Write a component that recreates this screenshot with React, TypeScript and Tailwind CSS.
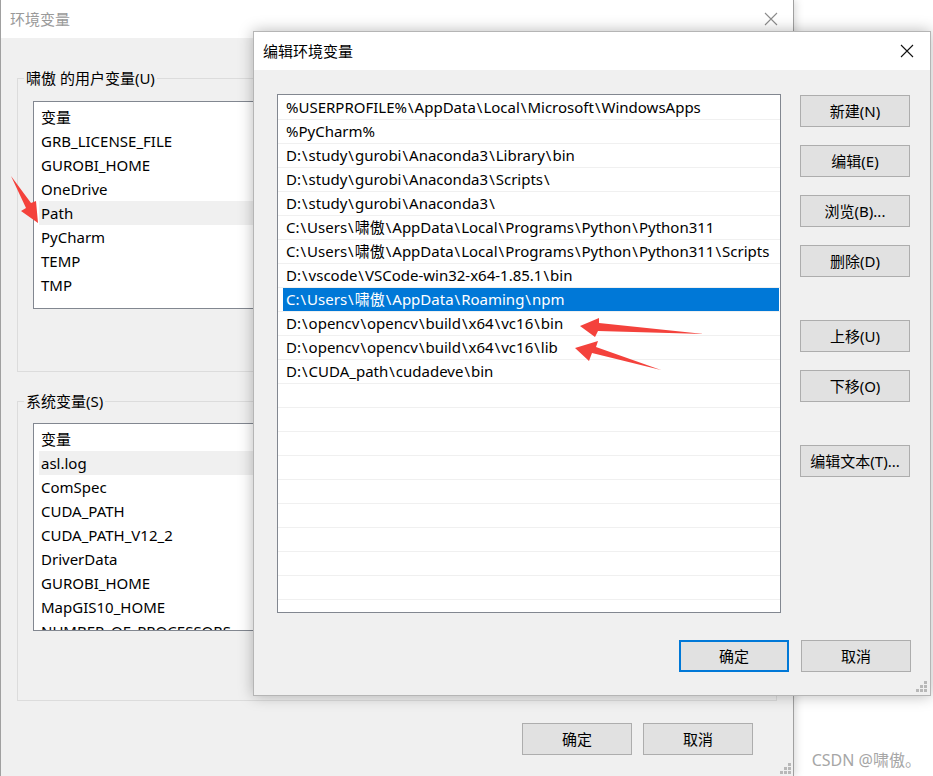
const userVars = ["GRB_LICENSE_FILE", "GUROBI_HOME", "OneDrive", "Path", "PyCharm", "TEMP", "TMP"];
const sysVars = [
  "asl.log",
  "ComSpec",
  "CUDA_PATH",
  "CUDA_PATH_V12_2",
  "DriverData",
  "GUROBI_HOME",
  "MapGIS10_HOME",
  "NUMBER_OF_PROCESSORS",
];
const paths = [
  "%USERPROFILE%\\AppData\\Local\\Microsoft\\WindowsApps",
  "%PyCharm%",
  "D:\\study\\gurobi\\Anaconda3\\Library\\bin",
  "D:\\study\\gurobi\\Anaconda3\\Scripts\\",
  "D:\\study\\gurobi\\Anaconda3\\",
  "C:\\Users\\啸傲\\AppData\\Local\\Programs\\Python\\Python311",
  "C:\\Users\\啸傲\\AppData\\Local\\Programs\\Python\\Python311\\Scripts",
  "D:\\vscode\\VSCode-win32-x64-1.85.1\\bin",
  "C:\\Users\\啸傲\\AppData\\Roaming\\npm",
  "D:\\opencv\\opencv\\build\\x64\\vc16\\bin",
  "D:\\opencv\\opencv\\build\\x64\\vc16\\lib",
  "D:\\CUDA_path\\cudadeve\\bin",
];
const SELECTED = 8;

// backslash in Noto Sans is narrower than in the Windows UI font, pad it a bit
const PathText = ({ text }: { text: string }) => {
  const parts = text.split("\\");
  return (
    <span>
      {parts.map((p, i) => (
        <span key={i}>
          {p}
          {i < parts.length - 1 && <span className="mx-[1px]">\</span>}
        </span>
      ))}
    </span>
  );
};

const CloseX = ({ color }: { color: string }) => (
  <svg width="14" height="14" viewBox="0 0 14 14">
    <path d="M1 1L13 13M13 1L1 13" stroke={color} strokeWidth="1.1" />
  </svg>
);

const Grip = () => (
  <svg width="11" height="11" viewBox="0 0 11 11" fill="#b8b8b8">
    <rect x="8" y="0" width="3" height="3" />
    <rect x="4" y="4" width="3" height="3" />
    <rect x="8" y="4" width="3" height="3" />
    <rect x="0" y="8" width="3" height="3" />
    <rect x="4" y="8" width="3" height="3" />
    <rect x="8" y="8" width="3" height="3" />
  </svg>
);

const Btn = ({ label, primary }: { label: string; primary?: boolean }) => (
  <div
    className={
      primary
        ? "w-[110px] h-[32px] shrink-0 flex items-center justify-center bg-[#e1e1e1] border-2 border-[#0078d7] text-black"
        : "w-[110px] h-[32px] shrink-0 flex items-center justify-center bg-[#e1e1e1] border border-[#adadad] text-black"
    }
  >
    {label}
  </div>
);

const VarList = ({ items, active }: { items: string[]; active: number }) => (
  <div className="ml-[15px] w-[728px] h-[208px] bg-white border border-[#828790] pt-[3px] overflow-hidden">
    <div className="h-[24px] flex items-center pl-[7px]">变量</div>
    {items.map((it, i) => (
      <div key={it} className="h-[24px] pl-[5px]">
        <div
          className={
            i === active
              ? "h-full flex items-center pl-[2px] bg-[#f0f0f0] whitespace-nowrap"
              : "h-full flex items-center pl-[2px] whitespace-nowrap"
          }
        >
          {it}
        </div>
      </div>
    ))}
  </div>
);

const BackWindow = () => (
  <div className="absolute left-0 top-0 w-[794px] h-[776px] bg-[#f0f0f0] border-x border-[#a0a0a0] flex flex-col shadow-[2px_0_8px_rgba(0,0,0,0.15)]">
    <div className="h-[38px] bg-white flex items-center justify-between pl-[9px] pr-[15px] text-[#9a9a9a]">
      <span>环境变量</span>
      <CloseX color="#8c8c8c" />
    </div>
    <div className="flex-1 px-[16px] flex flex-col">
      <div className="mt-[40px] h-[294px] border border-[#dcdcdc] relative pt-[22px]">
        <span className="absolute -top-[8px] left-[6px] bg-[#f0f0f0] px-[2px]">啸傲 的用户变量(U)</span>
        <VarList items={userVars} active={3} />
      </div>
      <div className="mt-[29px] h-[300px] border border-[#dcdcdc] relative pt-[21px]">
        <span className="absolute -top-[8px] left-[6px] bg-[#f0f0f0] px-[2px]">系统变量(S)</span>
        <VarList items={sysVars} active={0} />
      </div>
      <div className="mt-[22px] flex justify-end gap-[11px] pr-[24px]">
        <Btn label="确定" />
        <Btn label="取消" />
      </div>
      <div className="flex-1 flex items-end justify-end pb-[2px] -mr-[14px]">
        <Grip />
      </div>
    </div>
  </div>
);

const EditDialog = () => (
  <div className="absolute left-[253px] top-[31px] w-[678px] h-[665px] bg-[#f0f0f0] border border-[#b5b5b5] flex flex-col shadow-[0_0_14px_rgba(0,0,0,0.28)]">
    <div className="h-[38px] bg-white flex items-center justify-between pl-[9px] pr-[16px]">
      <span>编辑环境变量</span>
      <CloseX color="#111" />
    </div>
    <div className="flex-1 flex flex-col pl-[23px] pr-[19px] pt-[24px]">
      <div className="flex">
        <div className="w-[504px] h-[519px] shrink-0 bg-white border border-[#828790] pt-[1px] overflow-hidden">
          {Array.from({ length: 22 }).map((_, i) => (
            <div key={i} className="h-[24px] border-b border-[#f0f0f0] pl-[5px] pr-[1px]">
              <div
                className={
                  i === SELECTED
                    ? "h-full flex items-center pl-[3px] bg-[#0078d7] text-white whitespace-nowrap"
                    : "h-full flex items-center pl-[3px] whitespace-nowrap"
                }
              >
                {paths[i] ? <PathText text={paths[i]} /> : null}
              </div>
            </div>
          ))}
        </div>
        <div className="ml-[19px] pt-[1px] flex flex-col">
          <div className="flex flex-col gap-[18px]">
            <Btn label="新建(N)" />
            <Btn label="编辑(E)" />
            <Btn label="浏览(B)..." />
            <Btn label="删除(D)" />
          </div>
          <div className="mt-[43px] flex flex-col gap-[18px]">
            <Btn label="上移(U)" />
            <Btn label="下移(O)" />
          </div>
          <div className="mt-[43px]">
            <Btn label="编辑文本(T)..." />
          </div>
        </div>
      </div>
      <div className="mt-[27px] flex justify-end gap-[12px]">
        <Btn label="确定" primary />
        <Btn label="取消" />
      </div>
      <div className="flex-1 flex items-end justify-end pb-[3px] -mr-[16px]">
        <Grip />
      </div>
    </div>
  </div>
);

const Arrows = () => (
  <svg className="absolute left-0 top-0 pointer-events-none" width="933" height="776" viewBox="0 0 933 776">
    <g fill="#f4423c">
      <polygon points="11,176 31,203 36,201 38,223 21,211 26,208" />
      <polygon points="580,326 599,318 599,323 704,334 598,331 595,337" />
      <polygon points="575,348 598,341 596,347 661,370 592,353 589,361" />
    </g>
  </svg>
);

export default function App() {
  return (
    <div className="relative w-[933px] h-[776px] overflow-hidden bg-white text-[15px] text-black font-[family-name:'Noto_Sans','Noto_Sans_CJK_SC',sans-serif] leading-none">
      <BackWindow />
      <EditDialog />
      <Arrows />
      <div className="absolute right-[12px] bottom-[8px] text-[16px] text-[#a6a6a6]">CSDN @啸傲。</div>
    </div>
  );
}
